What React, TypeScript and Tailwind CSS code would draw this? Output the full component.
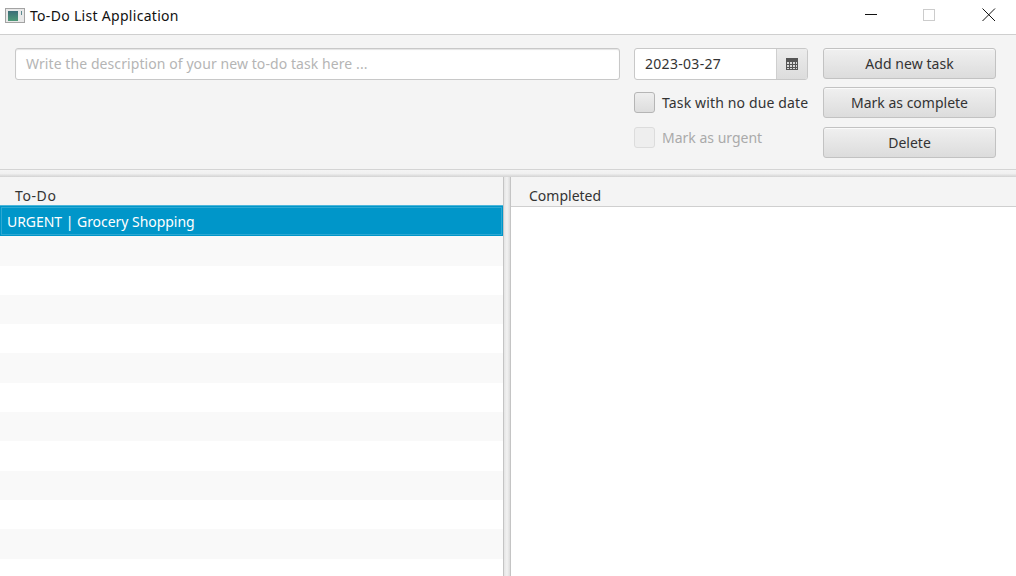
import React from "react";

const rows = Array.from({ length: 12 }, (_, i) => i);

function Btn({ label, cls }: { label: string; cls: string }) {
  return (
    <div className={`h-[31px] w-[173px] flex items-center justify-center pb-[1px] rounded-[3px] border border-[#c2c2c2] bg-gradient-to-b from-[#f0f0f0] to-[#dcdcdc] text-[#333] shadow-[inset_0_1px_0_#fafafa] ${cls}`}>
      {label}
    </div>
  );
}

export default function App() {
  return (
    <div className="w-[1016px] h-[576px] overflow-hidden flex flex-col bg-white font-['Noto_Sans','Open_Sans',sans-serif] text-[14px]">
      <div className="h-[35px] shrink-0 flex items-center bg-white border-b border-[#cfcfcf] pl-[5px] text-[#111]">
        <svg width="20" height="15" viewBox="0 0 20 15" className="mr-[5px] mb-[4px]">
          <rect x="0.5" y="0.5" width="19" height="14" fill="#e8e8e8" stroke="#a3a3a3" />
          <defs>
            <linearGradient id="g" x1="0" y1="0" x2="0" y2="1">
              <stop offset="0" stopColor="#3c6d78" />
              <stop offset="1" stopColor="#4f9a78" />
            </linearGradient>
          </defs>
          <rect x="3" y="3" width="10" height="10" fill="url(#g)" />
          <rect x="16" y="3" width="1" height="4" fill="#5c8a90" />
        </svg>
        <span className="tracking-[0.3px] mb-[4px]">To-Do List Application</span>
        <div className="ml-auto flex items-center h-full">
          <svg width="58" height="30" viewBox="0 0 58 30">
            <path d="M0 12.5H12" stroke="#111" strokeWidth="1" />
          </svg>
          <svg width="59" height="30" viewBox="0 0 59 30">
            <rect x="0.5" y="7.5" width="11" height="11" fill="none" stroke="#cccccc" />
          </svg>
          <svg width="34" height="30" viewBox="0 0 34 30">
            <path d="M0.5 6.5L13 19M13 6.5L0.5 19" stroke="#111" strokeWidth="1" />
          </svg>
        </div>
      </div>

      <div className="h-[135px] shrink-0 bg-[#f4f4f4] border-b border-[#d4d4d4] flex pt-[13px] pl-[15px]">
        <div className="w-[605px] h-[32px] rounded-[3px] border border-[#c8c8c8] bg-white shadow-[inset_0_1px_1px_#e4e4e4] flex items-center pb-[2px] pl-[10px] text-[#b5b5b5] tracking-[0.08px]">
          Write the description of your new to-do task here ...
        </div>
        <div className="ml-[14px] w-[174px] flex flex-col">
          <div className="h-[32px] w-[174px] flex rounded-[3px] border border-[#c8c8c8] bg-white overflow-hidden">
            <div className="flex-1 flex items-center pb-[2px] pl-[10px] text-[#333] tracking-[0.3px]">2023-03-27</div>
            <div className="w-[31px] pr-[1px] flex items-center justify-center bg-gradient-to-b from-[#ececec] to-[#dcdcdc] border-l border-[#cfcfcf]">
              <svg width="12" height="12" viewBox="0 0 12 12">
                <rect width="12" height="12" fill="#555" />
                <g fill="#d8d8d8">
                  <rect x="1" y="4" width="2" height="2" />
                  <rect x="4" y="4" width="2" height="2" />
                  <rect x="7" y="4" width="2" height="2" />
                  <rect x="10" y="4" width="1" height="2" />
                  <rect x="1" y="7" width="2" height="2" />
                  <rect x="4" y="7" width="2" height="2" />
                  <rect x="7" y="7" width="2" height="2" />
                  <rect x="10" y="7" width="1" height="2" />
                  <rect x="1" y="10" width="2" height="1" />
                  <rect x="4" y="10" width="2" height="1" />
                  <rect x="7" y="10" width="2" height="1" />
                  <rect x="10" y="10" width="1" height="1" />
                </g>
              </svg>
            </div>
          </div>
          <div className="mt-[11px] flex items-center text-[#333] whitespace-nowrap h-[22px]">
            <div className="w-[21px] h-[21px] shrink-0 mr-[7px] rounded-[3px] border border-[#b5b5b5] bg-gradient-to-b from-[#eeeeee] to-[#dddddd]" />
            <span className="tracking-[0.14px]">Task with no due date</span>
          </div>
          <div className="mt-[13px] flex items-center text-[#aaaaaa] whitespace-nowrap h-[22px]">
            <div className="w-[21px] h-[21px] shrink-0 mr-[7px] rounded-[3px] border border-[#dcdcdc] bg-[#eeeeee]" />
            Mark as urgent
          </div>
        </div>
        <div className="ml-[15px] flex flex-col">
          <Btn label="Add new task" cls="tracking-[0.05px]" />
          <Btn label="Mark as complete" cls="mt-[8px]" />
          <Btn label="Delete" cls="mt-[9px]" />
        </div>
      </div>

      <div className="h-[7px] shrink-0 bg-gradient-to-b from-[#f4f4f4] via-[#f0f0f0] to-[#d2d2d2]" />

      <div className="flex-1 flex min-h-0">
        <div className="w-[503px] flex flex-col min-h-0 overflow-hidden">
          <div className="h-[28px] shrink-0 bg-[#f4f4f4] flex items-end pl-[15px] text-[#333] tracking-[0.6px] leading-[19px]">To-Do</div>
          {rows.map((i) => (
            <div
              key={i}
              className={
                i === 0
                  ? "h-[31.3px] shrink-0 bg-[#0096c9] border-t border-[#4db6da] shadow-[inset_0_0_0_1px_#0096c9,inset_0_0_0_2px_#2ea8d2] flex items-center pl-[7px] text-white tracking-[-0.04px]"
                  : i % 2 === 1
                    ? "h-[29.3px] shrink-0 bg-[#f9f9f9]"
                    : "h-[29.3px] shrink-0 bg-white"
              }
            >
              {i === 0 ? "URGENT | Grocery Shopping" : null}
            </div>
          ))}
        </div>
        <div className="w-[8px] shrink-0 bg-gradient-to-r from-[#e4e4e4] via-[#f2f2f2] to-[#dcdcdc] border-x border-[#c4c4c4]" />
        <div className="flex-1 flex flex-col">
          <div className="h-[30px] shrink-0 bg-[#f4f4f4] border-b border-[#cfcfcf] flex items-end pl-[18px] text-[#333]">Completed</div>
          <div className="flex-1 bg-white" />
        </div>
      </div>
    </div>
  );
}
